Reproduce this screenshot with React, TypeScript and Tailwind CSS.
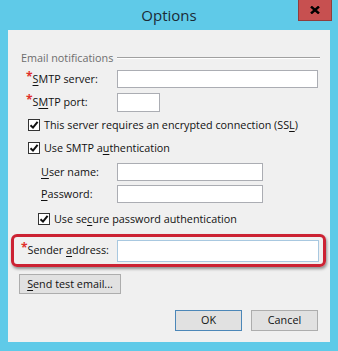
import React from 'react';

const Req = () => <span className="text-[#e0302c] text-[12px] font-bold relative -top-[2px] leading-none">*</span>;
const K = ({ children }: { children: React.ReactNode }) => (
  <span className="underline decoration-[1px] underline-offset-[2px]">{children}</span>
);

const Check = () => (
  <span className="w-[12px] h-[12px] border border-[#333] bg-white flex items-center justify-center shrink-0">
    <svg width="10" height="10" viewBox="0 0 10 10">
      <path d="M1.5 5.2 L4 7.6 L8.6 1.8" fill="none" stroke="#111" strokeWidth="2" />
    </svg>
  </span>
);

const Field = ({ w, h = 18 }: { w: string; h?: number }) => (
  <div className={`${w} bg-white border border-[#abadb3]`} style={{ height: h }} />
);

const Btn = ({ children, cls }: { children: React.ReactNode; cls: string }) => (
  <button className={`h-[20px] bg-[#e1e1e1] border ${cls} text-[10.8px] text-[#111] flex items-center justify-center`}>
    {children}
  </button>
);

export default function App() {
  return (
    <div className="w-[338px] h-[351px] bg-[#5fcae8] flex flex-col font-['Open_Sans'] text-[10.8px] text-[#111] overflow-hidden">
      {/* title bar */}
      <div className="h-[30px] flex shrink-0">
        <div className="flex-1 pl-[40px] flex items-center justify-center text-[15px] text-[#1b2a35] pt-[1px]">Options</div>
        <div className="w-[34px] h-[21px] bg-[#c75050] border border-[#8f3c3c] border-t-0 flex items-center justify-center mr-[6px]">
          <svg width="10" height="8" viewBox="0 0 10 8">
            <path d="M1 0.5 L9 7.5 M9 0.5 L1 7.5" stroke="#000" strokeWidth="2.4" />
          </svg>
        </div>
      </div>

      {/* client */}
      <div className="mx-[8px] h-[312px] bg-[#f0f0f0] flex flex-col">
        <div className="mt-[21px] h-[14px] flex items-center">
          <span className="w-[109px] pl-[13px] text-[#6d6d6d] leading-none">Email notifications</span>
          <div className="flex-1 h-px bg-[#a0a0a0] border-b border-white box-content mr-[10px]" />
        </div>

        <div className="mt-[5px] h-[18px] flex items-center">
          <span className="w-[109px] pl-[18px]"><Req /><K>S</K>MTP server:</span>
          <Field w="w-[201px]" />
        </div>

        <div className="mt-[5px] h-[19px] flex items-center">
          <span className="w-[109px] pl-[18px]"><Req />S<K>M</K>TP port:</span>
          <Field w="w-[43px]" h={19} />
        </div>

        <div className="mt-[5px] h-[16px] flex items-center pl-[20px] gap-[4px]">
          <Check />
          <span>This server requires an encrypted connection (SS<K>L</K>)</span>
        </div>

        <div className="mt-[7px] h-[16px] flex items-center pl-[20px] gap-[4px]">
          <Check />
          <span>Use SMTP a<K>u</K>thentication</span>
        </div>

        <div className="mt-[7px] h-[18px] flex items-center">
          <span className="w-[109px] pl-[33px]"><K>U</K>ser name:</span>
          <Field w="w-[146px]" />
        </div>

        <div className="mt-[4px] h-[18px] flex items-center">
          <span className="w-[109px] pl-[33px]"><K>P</K>assword:</span>
          <Field w="w-[146px]" />
        </div>

        <div className="mt-[8px] h-[16px] flex items-center pl-[30px] gap-[4px]">
          <Check />
          <span>Use se<K>c</K>ure password authentication</span>
        </div>

        <div className="mt-[7px] ml-[3px] w-[315px] h-[33px] border-[3px] border-[#cc2233] rounded-[6px] shadow-[1px_2px_3px_rgba(0,0,0,0.4)] flex items-center">
          <span className="w-[103px] pl-[7px]"><Req />Sender <K>a</K>ddress:</span>
          <div className="w-[202px] h-[22px] bg-white border border-[#a8c8e0]" />
        </div>

        <div className="mt-[7px] ml-[11px]">
          <Btn cls="w-[102px] border-[#adadad]"><K>S</K>end test email...</Btn>
        </div>

        <div className="mt-[16px] flex justify-end gap-[9px] mr-[12px]">
          <Btn cls="w-[67px] h-[21px] border-[#4c87b8]">OK</Btn>
          <Btn cls="w-[67px] h-[21px] border-[#adadad]">Cancel</Btn>
        </div>
      </div>
    </div>
  );
}
